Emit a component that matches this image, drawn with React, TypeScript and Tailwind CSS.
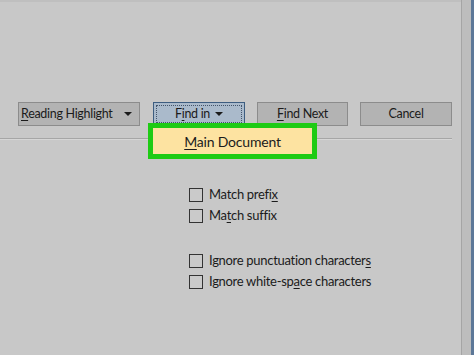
import React from "react"

const font = { fontFamily: 'Lato, "Noto Sans", sans-serif' }

function Caret() {
  return <div className="w-0 h-0 border-l-[4px] border-r-[4px] border-t-[4px] border-l-transparent border-r-transparent border-t-[#1b1b1b]" />
}

function Btn({ children, className = "" }: { children: React.ReactNode; className?: string }) {
  return (
    <div
      className={[
        "h-[24px] flex items-center border border-[#8c8c8c] bg-[#b3b3b3] text-[12.5px] tracking-[-0.3px] text-[#1b1b1b] whitespace-nowrap shrink-0",
        className,
      ].join(" ")}
    >
      {children}
    </div>
  )
}

function Check({ children }: { children: React.ReactNode }) {
  return (
    <div className="flex items-center h-[15px] gap-[6px]">
      <div className="h-[14px] w-[14px] border border-[#333] bg-[#cacaca] shrink-0" />
      <span className="text-[13px] tracking-[-0.3px] leading-none text-[#1b1b1b] whitespace-nowrap">{children}</span>
    </div>
  )
}

export default function App() {
  return (
    <div className="w-[474px] h-[355px] bg-[#c8c8c8] flex overflow-hidden" style={font}>
      <div className="relative flex-1 flex flex-col border-t-2 border-[#bfbfbf]">
        {/* button row */}
        <div className="flex items-center pl-[18px] pt-[100px] gap-[12px]">
          <Btn className="w-[122px] justify-between pl-[2px] pr-[7px] mr-[1px]">
            <span>
              <span className="underline underline-offset-2">R</span>eading Highlight
            </span>
            <Caret />
          </Btn>
          <div className="h-[24px] w-[92px] border border-[#3d5d80] bg-[#aabacb] p-[2px] shrink-0">
            <div className="h-full w-full border border-dotted border-[#44546a] flex items-center justify-center gap-[5px] text-[12.5px] tracking-[-0.3px] text-[#1b1b1b] whitespace-nowrap">
              <span>
                F<span className="underline underline-offset-2">i</span>nd in
              </span>
              <Caret />
            </div>
          </div>
          <Btn className="w-[91px] justify-center">
            <span>
              <span className="underline underline-offset-2">F</span>ind Next
            </span>
          </Btn>
          <Btn className="w-[92px] justify-center">Cancel</Btn>
        </div>

        {/* separator */}
        <div className="mt-[12px] w-[452px] h-[1px] bg-[#a6a6a6]" />
        <div className="w-[452px] h-[1px] bg-[#d6d6d6]" />

        {/* options */}
        <div className="flex flex-col pl-[189px] pt-[47px]">
          <div className="flex flex-col gap-[6px]">
            <Check>
              Match prefi<span className="underline underline-offset-2">x</span>
            </Check>
            <Check>
              Ma<span className="underline underline-offset-2">t</span>ch suffix
            </Check>
          </div>
          <div className="flex flex-col gap-[6px] mt-[30px]">
            <Check>
              Ignore punctuation character<span className="underline underline-offset-2">s</span>
            </Check>
            <Check>
              Ignore white-sp<span className="underline underline-offset-2">a</span>ce characters
            </Check>
          </div>
        </div>

        {/* dropdown menu */}
        <div className="absolute left-[148px] top-[121px] w-[169px] h-[36px] bg-[#1ecb14] p-[5px]">
          <div className="h-full w-full bg-[#fde3a1] flex items-center justify-center text-[14px] tracking-[-0.2px] text-[#1b1b1b]">
            <span>
              <span className="underline underline-offset-2">M</span>ain Document
            </span>
          </div>
        </div>
      </div>

      {/* right frame */}
      <div className="w-[1px] bg-[#a5a5a5]" />
      <div className="w-[9px] bg-[#bdbdbd]" />
      <div className="w-[3px] bg-[#5d7898]" />
    </div>
  )
}
